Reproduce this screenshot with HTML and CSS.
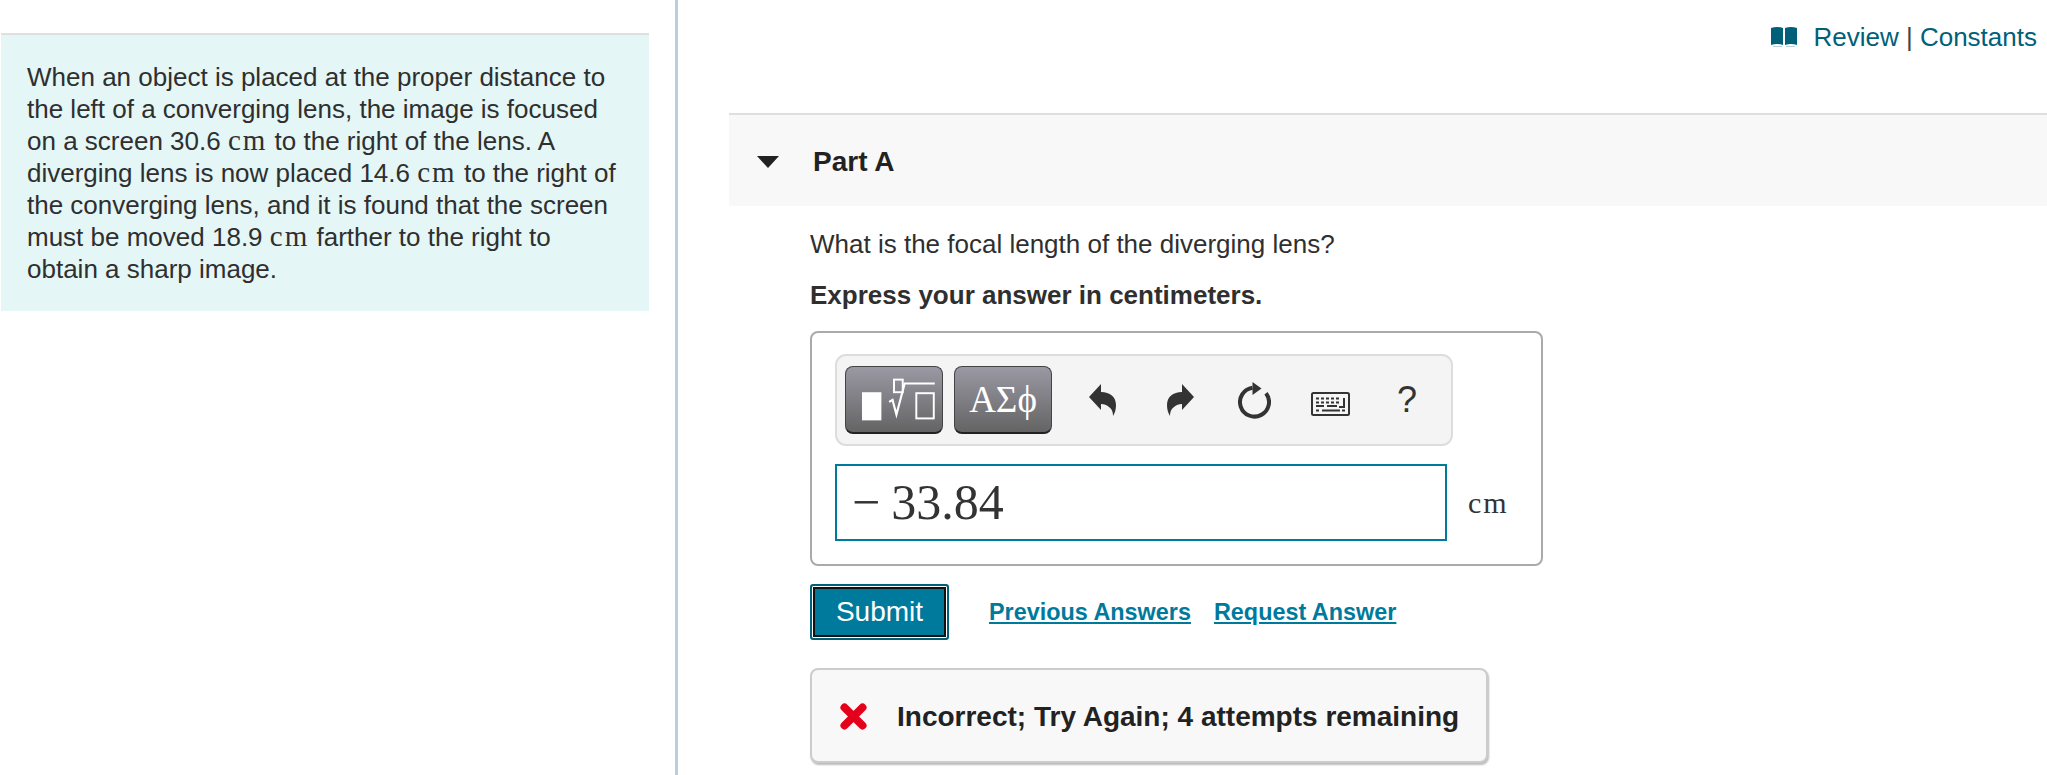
FILE: index.html
```html
<!DOCTYPE html>
<html lang="en">
<head>
<meta charset="utf-8">
<title>Part A</title>
<link rel="stylesheet" href="styles.css">
</head>
<body>
<div class="page">
  <aside class="side">
    <div class="intro">
      When an object is placed at the proper distance to the left of a converging lens, the image is focused on a screen 30.6 <span class="unit">cm</span> to the right of the lens. A diverging lens is now placed 14.6 <span class="unit">cm</span> to the right of the converging lens, and it is found that the screen must be moved 18.9 <span class="unit">cm</span> farther to the right to obtain a sharp image.
    </div>
  </aside>
  <main class="main">
    <div class="top">
      <svg class="book" viewBox="0 0 26 20" aria-hidden="true"><path d="M0 1q6-2 12 0v17q-6-2-12 0zM14 1q6-2 12 0v17q-6-2-12 0z" fill="#00607a"/><path d="M2 19.500h9M15 19.500h9" stroke="#b7d0d8"/></svg>
      <a class="review">Review</a><span class="sep"> | </span><a class="review">Constants</a>
    </div>
    <section class="part">
      <header class="part-head">
        <svg class="caret" viewBox="0 0 22 12" aria-hidden="true"><path d="M0 0h22L11 12z" fill="#222"/></svg>
        <h2 class="part-title">Part A</h2>
      </header>
      <div class="part-body">
        <p class="question">What is the focal length of the diverging lens?</p>
        <p class="express">Express your answer in centimeters.</p>
        <div class="answer">
          <div class="toolbar">
            <button class="tool-btn">
              <svg class="tpl" viewBox="0 0 98 67" aria-hidden="true">
                <rect x="16" y="26" width="20" height="29" fill="#fff"/>
                <rect x="49" y="13" width="9" height="13" fill="none" stroke="#fff" stroke-width="2"/>
                <path d="M44 36l3.500-2 4 15 8.500-32h31" fill="none" stroke="#fff" stroke-width="2.200"/>
                <rect x="72" y="27" width="18" height="26" fill="none" stroke="#fff" stroke-width="2"/>
              </svg>
            </button>
            <button class="tool-btn greek">ΑΣϕ</button>
            <div class="tools">
              <svg class="ic ic-undo" viewBox="0 0 27 32" aria-hidden="true"><path d="M0 13L12 0v8c9 0 15 5 15 13 0 4-1 8-3 11 0-4-1-7-4-9-2-2-5-3-8-3v6z" fill="#333"/></svg>
              <svg class="ic ic-back" viewBox="0 0 27 32" aria-hidden="true"><path d="M27 13L15 0v8C6 8 0 13 0 21c0 4 1 8 3 11 0-4 1-7 4-9 2-2 5-3 8-3v6z" fill="#333"/></svg>
              <svg class="ic ic-redo" viewBox="0 0 33 37" aria-hidden="true"><path d="M28 11.200A14.500 14.500 0 1 1 14.500 5.700" fill="none" stroke="#333" stroke-width="4"/><path d="M14.500 0l9 6.500-9 6.500z" fill="#333"/></svg>
              <svg class="ic ic-kbd" viewBox="0 0 39 24" aria-hidden="true"><rect x="1" y="1" width="37" height="22" rx="1.500" fill="#f5f5f5" stroke="#333" stroke-width="2"/><path d="M5 6.500h3M10 6.500h3M15 6.500h3M20 6.500h3M25 6.500h3M5 10.500h3M10 10.500h3M15 10.500h3M20 10.500h3M25 10.500h3M5 14h8M16 14h10M33 6v9h-5M5 18.500h3M11 18.500h18M31 18.500h3" stroke="#333" stroke-width="2" fill="none"/></svg>
              <span class="help">?</span>
            </div>
          </div>
          <div class="entry">
            <div class="field"><span class="minus">−</span>33.84</div>
            <span class="field-unit">cm</span>
          </div>
        </div>
        <div class="actions">
          <button class="submit">Submit</button>
          <a class="link">Previous Answers</a>
          <a class="link">Request Answer</a>
        </div>
        <div class="feedback">
          <svg class="cross" viewBox="0 0 27 27" aria-hidden="true"><path d="M4.500 4.500l18 18M22.500 4.500l-18 18" fill="none" stroke="#e2001a" stroke-width="8" stroke-linecap="round"/></svg>
          <span class="feedback-text">Incorrect; Try Again; 4 attempts remaining</span>
        </div>
      </div>
    </section>
  </main>
</div>
</body>
</html>
```

FILE: styles.css
```css
* { box-sizing: border-box; }
html, body { margin: 0; height: 100%; overflow: hidden; background: #fff; }
body { font-family: "Liberation Sans", Arial, sans-serif; font-size: 26px; color: #2f2f2f; }
.page { display: flex; height: 775px; }
.side { width: 678px; flex: none; padding: 33px 28px 0 1px; border-right: 3px solid #b9cfe0; }
.intro { width: 648px; height: 278px; padding: 26px 24px 0 26px; background: #e5f6f6; border-top: 2px solid #dfdfdf; line-height: 32px; }
.unit { font-family: "Liberation Serif", serif; font-size: 29px; letter-spacing: 2px; line-height: 20px; }
.main { flex: 1; padding-left: 51px; min-width: 0; }
.top { display: flex; justify-content: flex-end; align-items: flex-start; height: 113px; padding: 21px 10px 0 0; color: #00607a; line-height: 32px; }
.book { width: 26px; height: 20px; margin: 6px 16px 0 0; }
.sep { white-space: pre; color: #444; }
.part { border-top: 2px solid #dfdfdf; }
.part-head { display: flex; align-items: center; height: 91px; padding: 2px 0 0 28px; background: #f8f8f8; }
.caret { width: 22px; height: 12px; margin-right: 34px; }
.part-title { margin: 0; font-size: 28px; font-weight: bold; color: #222; }
.part-body { padding: 22px 0 0 81px; }
.question { margin: 0; line-height: 32px; height: 32px; }
.express { margin: 19px 0 0; line-height: 32px; height: 32px; font-weight: bold; }
.answer { width: 733px; height: 235px; margin-top: 20px; padding: 21px 25px 0 23px; border: 2px solid #aaa; border-radius: 8px; }
.toolbar { display: flex; align-items: center; width: 618px; height: 92px; padding: 0 8px; background: #f4f4f4; border: 2px solid #ddd; border-radius: 11px; }
.tool-btn { display: flex; align-items: center; justify-content: center; width: 98px; height: 68px; margin-right: 11px; padding: 0; color: #fff; background: linear-gradient(#9a99a4, #646464); border: 1px solid #444; border-bottom: 2px solid #222; border-radius: 8px; }
.greek { margin-right: 0; font-family: "Liberation Serif", serif; font-size: 37px; }
.tpl { width: 96px; height: 65px; }
.tools { display: flex; align-items: center; flex: 1; height: 100%; padding-left: 37px; }
.ic { flex: none; }
.ic-undo { width: 27px; height: 32px; margin-right: 51px; }
.ic-back { width: 27px; height: 32px; margin-right: 44px; }
.ic-redo { width: 33px; height: 37px; margin-right: 40px; }
.ic-kbd { width: 39px; height: 24px; margin-right: 47px; margin-top: 8px; }
.help { font-size: 36px; line-height: 40px; color: #333; }
.entry { display: flex; align-items: center; margin-top: 18px; }
.field { width: 612px; height: 77px; padding-left: 15px; border: 2px solid #007a9c; font-family: "Liberation Serif", serif; font-size: 50px; line-height: 72px; color: #333; }
.minus { margin-right: 11px; }
.field-unit { margin-left: 21px; font-family: "Liberation Serif", serif; font-size: 30px; letter-spacing: 2px; color: #333; }
.actions { display: flex; align-items: center; margin-top: 18px; }
.submit { width: 139px; height: 56px; margin-right: 40px; padding: 0; color: #fff; background: #007a9c; font-family: inherit; font-size: 28px; border: 2px solid #00607a; border-radius: 3px; box-shadow: inset 0 0 0 1px #fff, inset 0 0 0 3px #111; }
.link { margin-right: 23px; color: #007a9c; font-size: 23.400px; font-weight: bold; text-decoration: underline; }
.feedback { display: flex; align-items: center; width: 678px; height: 95px; margin-top: 28px; padding: 2px 0 0 28px; background: #f8f8f8; border: 2px solid #ccc; border-radius: 8px; box-shadow: 1px 2px 2px #bbb; }
.cross { width: 27px; height: 27px; margin-right: 30px; }
.feedback-text { font-size: 28px; font-weight: bold; color: #222; }
```
